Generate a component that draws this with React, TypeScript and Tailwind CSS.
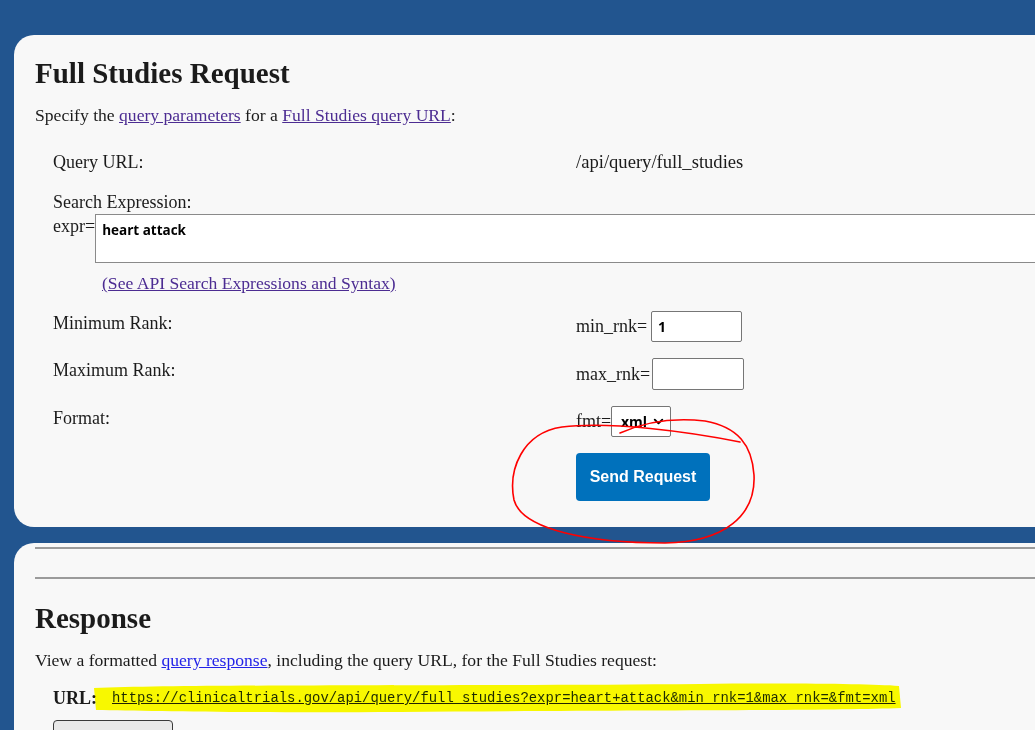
import { ChevronDown } from "lucide-react";

const REQUEST_URL =
  "https://clinicaltrials.gov/api/query/full_studies?expr=heart+attack&min_rnk=1&max_rnk=&fmt=xml";

function ParamRow({ label, children }: { label: string; children: React.ReactNode }) {
  return (
    <div className="grid grid-cols-[523px_1fr] items-start">
      <div className="leading-[24px]">{label}</div>
      <div className="flex items-center">{children}</div>
    </div>
  );
}

export default function App() {
  return (
    <div className="relative h-[730px] w-[1035px] overflow-hidden bg-[#22558f] pt-[35px] font-['Liberation_Serif',serif] text-[18px] text-[#1b1b1b]">
      {/* Request form */}
      <section className="ml-[14px] h-[492px] w-[1100px] rounded-[20px] bg-[#f8f8f8] pl-[21px] pt-[22px]">
        <h1 className="text-[29px] font-bold leading-[32px]">Full Studies Request</h1>
        <p className="mt-[14px] text-[17.6px] leading-[24px]">
          Specify the{" "}
          <a href="#" className="text-[#4c2c92] underline">query parameters</a> for a{" "}
          <a href="#" className="text-[#4c2c92] underline">Full Studies query URL</a>:
        </p>

        <div className="mt-[23px] pl-[18px]">
          <ParamRow label="Query URL:">
            <span className="text-[18.6px] leading-[24px]">/api/query/full_studies</span>
          </ParamRow>

          <div className="mt-[16px] leading-[24px]">Search Expression:</div>
          <div className="flex items-start">
            <span className="leading-[24px]">expr=</span>
            <div className="h-[49px] flex-1 border border-[#8a8a8a] bg-white px-[6px] pt-[5px] font-['Open_Sans',sans-serif] text-[13.5px] font-bold leading-[20px] text-black">
              heart attack
            </div>
          </div>
          <a href="#" className="mt-[8px] ml-[49px] block w-fit text-[17.6px] leading-[24px] text-[#4c2c92] underline">
            (See API Search Expressions and Syntax)
          </a>

          <div className="mt-[16px]">
            <ParamRow label="Minimum Rank:">
              <span className="w-[75px]">min_rnk=</span>
              <div className="flex h-[31px] w-[91px] items-center rounded-[2px] border border-[#767676] bg-white px-[6px] font-['Open_Sans',sans-serif] text-[14px] font-bold text-black">
                1
              </div>
            </ParamRow>
          </div>

          <div className="mt-[16px]">
            <ParamRow label="Maximum Rank:">
              <span className="w-[76px]">max_rnk=</span>
              <div className="h-[32px] w-[92px] rounded-[2px] border border-[#767676] bg-white" />
            </ParamRow>
          </div>

          <div className="mt-[16px]">
            <ParamRow label="Format:">
              <span className="w-[35px]">fmt=</span>
              <div className="flex h-[31px] w-[60px] items-center justify-between rounded-[2px] border border-[#767676] bg-white pl-[9px] pr-[4px] font-['Open_Sans',sans-serif] text-[14px] font-bold text-black">
                xml
                <ChevronDown size={15} strokeWidth={3} />
              </div>
            </ParamRow>
          </div>

          <div className="mt-[16px] pl-[523px]">
            <button className="h-[48px] w-[134px] rounded-[4px] bg-[#0071bc] font-['Liberation_Sans',sans-serif] text-[16px] font-bold text-white">
              Send Request
            </button>
          </div>
        </div>
      </section>

      {/* Response */}
      <section className="mt-[16px] ml-[14px] h-[400px] w-[1100px] rounded-[20px] bg-[#f8f8f8] pl-[21px] pt-[4px]">
        <div className="border-t-2 border-[#9b9b9b]" />
        <div className="mt-[28px] border-t-2 border-[#9b9b9b]" />
        <h2 className="mt-[23px] text-[29px] font-bold leading-[32px]">Response</h2>
        <p className="mt-[14px] text-[17.6px] leading-[24px]">
          View a formatted{" "}
          <a href="#" className="text-[#2323e8] underline">query response</a>, including the query URL, for the Full
          Studies request:
        </p>
        <div className="mt-[14px] flex items-center pl-[18px] leading-[24px]">
          <span className="w-[59px] font-bold">URL:</span>
          <a href="#" className="font-['Liberation_Mono',monospace] text-[13.9px] text-[#1d2b10] underline decoration-[#2323e8]">
            {REQUEST_URL}
          </a>
        </div>
        <button className="mt-[10px] ml-[18px] h-[36px] w-[120px] rounded-[4px] border border-[#3a3a3a] bg-[#e9e9e9]" />
      </section>

      {/* Marker annotations drawn over the page */}
      <svg className="pointer-events-none absolute left-0 top-0 mix-blend-multiply" width="1035" height="730">
        <path
          d="M94 688 C 200 684, 500 686, 700 684 C 800 683, 870 684, 899 686 L 901 708 C 820 711, 600 710, 400 712 C 250 713, 150 711, 96 710 Z"
          fill="#ffff00"
        />
      </svg>
      <svg className="pointer-events-none absolute left-0 top-0" width="1035" height="730" fill="none">
        <path
          d="M740 442 C 690 432, 610 421, 562 427 C 522 433, 508 470, 514 500 C 522 530, 590 543, 665 543 C 725 542, 756 515, 754 475 C 752 445, 738 427, 705 421 C 670 417, 640 424, 620 433"
          stroke="#ff0000"
          strokeWidth="1.6"
          strokeLinecap="round"
        />
      </svg>
    </div>
  );
}
